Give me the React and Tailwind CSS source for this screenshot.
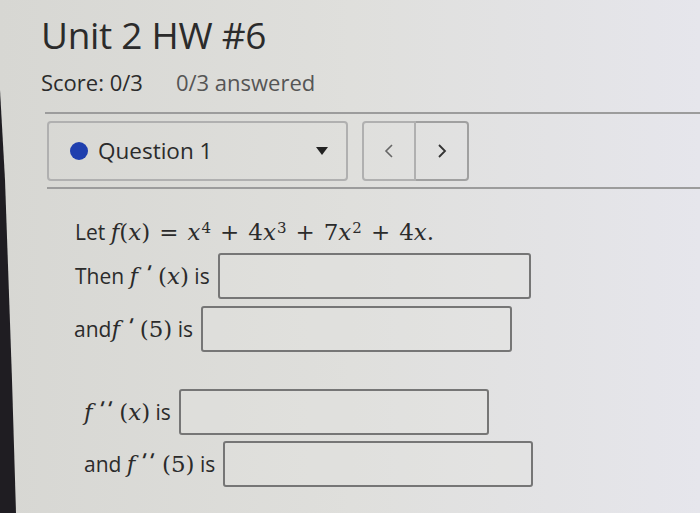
import React from 'react';

// math glyph helpers (KaTeX-ish look)
const MATH = "font-['DejaVu_Serif',serif] text-[23px]";

const M = ({ children }) => <span className={`${MATH} italic`}>{children}</span>;
const R = ({ children }) => <span className={MATH}>{children}</span>;
const Op = ({ children }) => <span className={`${MATH} mx-[9px]`}>{children}</span>;
const Sup = ({ children }) => (
  <sup className="ml-[1px] font-['DejaVu_Serif',serif] text-[15px]">{children}</sup>
);
const Prime = ({ n = 1 }) =>
  n === 1 ? (
    <span className="ml-[7px] mr-[7px] inline-block -skew-x-[18deg] font-['DejaVu_Sans',sans-serif] text-[19px] font-bold leading-none align-[5px]">
      '
    </span>
  ) : (
    <span className="ml-[5px] mr-[6px] inline-block -skew-x-[18deg] font-['DejaVu_Sans',sans-serif] text-[19px] font-bold leading-none align-[5px] tracking-[2px]">
      ''
    </span>
  );

const AnswerBox = ({ width }) => (
  <div
    className="h-[46px] rounded-[3px] border-2 border-[#767676] bg-[#e4e4e2]/30"
    style={{ width }}
  />
);

const Row = ({ children, box, gap = 8, className = '' }) => (
  <div className={`flex items-center ${className}`}>
    <span className="whitespace-nowrap">{children}</span>
    <div style={{ marginLeft: gap }}>
      <AnswerBox width={box} />
    </div>
  </div>
);

export default function App() {
  return (
    <div className="relative h-[513px] w-[700px] overflow-hidden bg-gradient-to-r from-[#d7d7d3] via-[#dfdfdc] to-[#e6e6ec] font-['Open_Sans',sans-serif] text-[#2b2b2b]">
      {/* monitor bezel on the left */}
      <svg className="absolute left-0 top-0" width="20" height="513">
        <polygon points="0,90 5,180 12,380 16,513 0,513" fill="#1f1d22" />
      </svg>

      <div className="pl-[41px] pt-[11px]">
        <h1 className="text-[37px] leading-[48px] tracking-[-0.3px]">Unit 2 HW #6</h1>
        <div className="mt-[9px] flex text-[22px] leading-[28px]">
          <span>Score: 0/3</span>
          <span className="ml-[33px] text-[#555]">0/3 answered</span>
        </div>
      </div>

      <div className="ml-[45px] mt-[16px] h-[2px] bg-[#9c9c9c]" />

      <div className="ml-[47px] mt-[7px] flex">
        <div className="flex h-[60px] w-[301px] items-center rounded-[4px] border-2 border-[#b0b0b0] pl-[21px] pr-[18px]">
          <span className="h-[18px] w-[18px] rounded-full bg-[#1f3fae]" />
          <span className="ml-[10px] text-[22.5px]">Question 1</span>
          <svg className="ml-auto" width="12" height="10" viewBox="0 0 12 10">
            <polygon points="0,1 12,1 6,9" fill="#222" />
          </svg>
        </div>
        <div className="ml-[14px] flex h-[60px]">
          <button className="flex w-[54px] items-center justify-center rounded-l-[4px] border-2 border-[#b0b0b0]">
            <svg width="10" height="16" viewBox="0 0 10 16">
              <path d="M8 2 L2 8 L8 14" fill="none" stroke="#666" strokeWidth="1.6" />
            </svg>
          </button>
          <button className="flex w-[53px] items-center justify-center rounded-r-[4px] border-2 border-l-0 border-[#a0a0a0]">
            <svg width="10" height="16" viewBox="0 0 10 16">
              <path d="M2 2 L8 8 L2 14" fill="none" stroke="#333" strokeWidth="1.8" />
            </svg>
          </button>
        </div>
      </div>

      <div className="ml-[47px] mt-[6px] h-[2px] bg-[#9c9c9c]" />

      <div className="pl-[75px] pt-[28px] text-[21px] text-[#2b2b2b]">
        <div className="leading-[30px] whitespace-nowrap">
          Let <M>f</M>
          <R>(</R><M>x</M><R>)</R><Op>=</Op>
          <M>x</M><Sup>4</Sup>
          <Op>+</Op><R>4</R><M>x</M><Sup>3</Sup>
          <Op>+</Op><R>7</R><M>x</M><Sup>2</Sup>
          <Op>+</Op><R>4</R><M>x</M><R>.</R>
        </div>
        <Row box={313} className="mt-[6px]">
          Then <M>f</M><Prime /><R>(</R><M>x</M><R>)</R> is
        </Row>
        <Row box={311} className="mt-[7px] -ml-[1px]">
          and<M>f</M><Prime /><R>(5)</R> is
        </Row>

        <div className="pl-[9px] pt-[37px]">
          <Row box={310}>
            <M>f</M><Prime n={2} /><R>(</R><M>x</M><R>)</R> is
          </Row>
          <Row box={310} className="mt-[6px]">
            and <M>f</M><Prime n={2} /><R>(5)</R> is
          </Row>
        </div>
      </div>
    </div>
  );
}
